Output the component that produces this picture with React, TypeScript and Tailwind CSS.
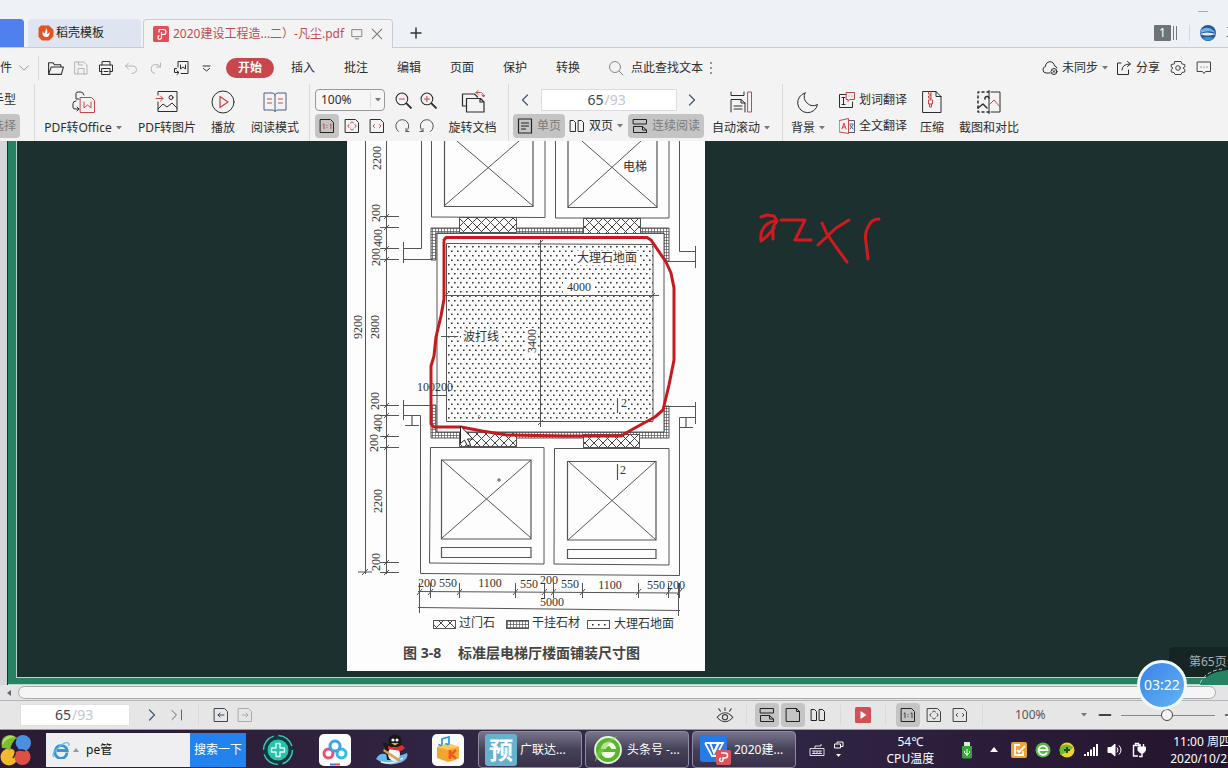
import React, { useState } from 'react';
import clsx from 'clsx';

interface IconProps {
  children: React.ReactNode;
  className?: string;
  box?: number;
}

const RED = '#c8464a';

// Thin line icon, drawn on a square grid of `box` units.
const Icon: React.FC<IconProps> = ({ children, className = 'h-4 w-4', box = 16 }) => (
  <svg
    viewBox={`0 0 ${box} ${box}`}
    className={clsx('shrink-0', className)}
    fill="none"
    stroke="currentColor"
    strokeWidth={1}
    strokeLinecap="round"
    strokeLinejoin="round"
    aria-hidden="true"
  >
    {children}
  </svg>
);

const Caret = () => (
  <svg viewBox="0 0 6 4" className="ml-1 h-1 w-1.5 shrink-0" fill="#777" aria-hidden="true">
    <path d="M0 0h6L3 3.5z" />
  </svg>
);

const ActualSize = ({ tone = RED }: { tone?: string }) => (
  <Icon>
    <path d="M1.5 1.5h10l3 3v10h-13z" />
    <path d="M4 6.5l1-.7v5M12 10.8v-5l-1 .7" stroke={tone} />
    <path d="M8 7.5v.1M8 9.5v.1" stroke={tone} />
  </Icon>
);

const FitPage = ({ tone = RED }: { tone?: string }) => (
  <Icon>
    <path d="M1.5 1.5h10l3 3v10h-13z" />
    <path d="M6.5 5L8 3.8 9.5 5M6.5 11L8 12.2 9.5 11M5 6.5L3.8 8 5 9.5M11 6.5L12.2 8 11 9.5" stroke={tone} />
  </Icon>
);

const FitWidth = ({ tone = RED }: { tone?: string }) => (
  <Icon>
    <path d="M1.5 1.5h10l3 3v10h-13z" />
    <path d="M5.5 6.5L4 8l1.5 1.5M10.5 6.5L12 8l-1.5 1.5" stroke={tone} />
  </Icon>
);

const Continuous = () => (
  <Icon>
    <path d="M1.5 1.5h13v4.5h-13zM14.5 14.5h-13v-6h9l4 3.5v2.5M10.5 8.5V12h4" />
  </Icon>
);

const TwoPages = () => (
  <Icon>
    <path d="M1.5 2.5h3l2 2v9h-5zM9.5 2.5h3l2 2v9h-5z" />
  </Icon>
);

const Chevron = ({ left = false }: { left?: boolean }) => (
  <Icon className="h-4 w-4 text-[#4b5a70]">
    <path d={left ? 'M10.5 3L5.5 8l5 5' : 'M5.5 3l5 5-5 5'} strokeWidth={1.3} />
  </Icon>
);

const Divider = ({ className }: { className?: string }) => (
  <span className={clsx('w-px shrink-0 bg-[#d9dadc]', className)} />
);

const PageField = ({ className, id }: { className: string; id: string }) => {
  const [page, setPage] = useState('65');
  return (
    <div className={clsx('flex items-center border bg-white text-sm', className)}>
      <label htmlFor={id} aria-label="页码" />
      <input
        id={id}
        value={page}
        onChange={(e) => setPage(e.target.value)}
        className="w-[17px] bg-transparent text-[#3c4654] outline-none"
      />
      <span className="text-[#c3c6ca]">/93</span>
    </div>
  );
};

const TabBar = () => (
  <header className="flex h-12 shrink-0 items-end border-b border-[#c6cdd8] bg-[#eef2f6]">
    <button aria-label="首页" className="h-7 w-6 shrink-0 rounded-tr bg-[#4f80ee]" />
    <button className="ml-1 flex h-7 w-[113px] shrink-0 items-center rounded-t bg-[#dfe5f0] pl-2.5 text-xs text-[#222]">
      <svg viewBox="0 0 16 16" className="mr-0.5 h-4 w-4" aria-hidden="true">
        <path d="M3 .5h8L15.5 5v6.5L11 15.5H4L.5 12V3z" fill="#e05325" />
        <path d="M5 6c-1.500 3 .5 6 3 6s4-2 3.500-5C10.500 8.500 9 9 9 9c1-2.500 0-4.500-1-6 0 3-1 3.500-1.500 5.500C5.500 8 5 7 5 6z" fill="#fff" />
      </svg>
      稻壳模板
    </button>
    <div className="ml-0.5 -mb-px flex h-[29px] w-[250px] shrink-0 items-center rounded-t border border-b-0 border-[#c6cdd8] bg-[#f3f3f4] pl-[9px]">
      <svg viewBox="0 0 16 16" className="mr-1 h-4 w-4 shrink-0" aria-hidden="true">
        <rect width="16" height="16" rx="1.5" fill="#dc5257" />
        <path d="M6 3.500h4.500a2.500 2.500 0 010 5H8.500M6 3.500v3M8.500 6v5.500a1.800 1.800 0 11-2-1.800" stroke="#fff" strokeWidth="1.2" fill="none" />
      </svg>
      <span className="whitespace-nowrap text-xs text-[#c24a50]">2020建设工程造...二）-凡尘.pdf</span>
      <span className="ml-auto flex items-center text-[#777]">
        <Icon className="mr-1.5 h-3.5 w-3.5"><path d="M2.5 3h11v8h-11zM6 13.5h4" /></Icon>
        <button aria-label="关闭标签" className="mr-2">
          <Icon className="h-3.5 w-3.5"><path d="M2.5 2.5l11 11M13.5 2.5l-11 11" strokeWidth={1.2} /></Icon>
        </button>
      </span>
    </div>
    <button aria-label="新建" className="ml-[15px] mb-1.5 text-[#333]">
      <Icon className="h-4 w-4"><path d="M8 3v10M3 8h10" strokeWidth={1.5} /></Icon>
    </button>
    <div className="ml-auto -mr-2.5 flex items-center pb-1.5">
      <span className="mr-0.5 flex h-4 w-[17px] items-center justify-center rounded-[1px] bg-[#6f7378] text-xs leading-4 text-white">1</span>
      <span className="h-3.5 w-1 border-x border-[#777]" />
      <Divider className="ml-3 mr-2.5 h-4" />
      <svg viewBox="0 0 16 16" className="h-4 w-4" aria-hidden="true">
        <circle cx="8" cy="8" r="8" fill="#24589f" />
        <path d="M1 5q7-5 13 1l1.800 2Q9 4.500.2 8z" fill="#78b2e0" />
        <path d="M0 9q6-3 16 0-6 1.500-9 1.500T0 9z" fill="#dcebf6" />
        <path d="M2 13q6-2 12 0-6 5-12 0z" fill="#3c94c6" />
      </svg>
      <span className="ml-2.5 text-xs text-[#555]">工</span>
    </div>
  </header>
);

const MENU = ['插入', '批注', '编辑', '页面', '保护', '转换'];

const MenuBar = () => (
  <nav className="flex h-9 shrink-0 items-center whitespace-nowrap bg-[#f3f3f4] pt-1 text-xs text-[#2d2d2d]">
    <button className="-ml-3 flex shrink-0 items-center">
      文件
      <Icon className="ml-1.5 h-3 w-3 text-[#777]"><path d="M2 5l6 6 6-6" /></Icon>
    </button>
    <Divider className="ml-2 mr-2 h-6" />
    <div className="flex shrink-0 items-center gap-[9px]">
      <button aria-label="打开">
        <Icon className="h-[17px] w-[17px]"><path d="M1.5 13.5v-11h4l1.5 2h6v2M1.5 13.5l2.500-7h11.500l-2 7z" /></Icon>
      </button>
      <button aria-label="保存" className="text-[#b5b5b8]">
        <Icon><path d="M2 2h9l3 3v9H2zM5 14V8.500h6V14M5.500 2v3h4" /></Icon>
      </button>
      <button aria-label="打印">
        <Icon><path d="M4 5V1.500h8V5M4 11.500H1.500V5h13v6.500H12M4 8.500h8v6H4zM6 11.500h4" /></Icon>
      </button>
      <button aria-label="撤销" className="text-[#b5b5b8]">
        <Icon><path d="M5.500 3L2.500 6l3 3M2.500 6h7.500q3.500 0 3.500 3.500T9 13.500" /></Icon>
      </button>
      <button aria-label="重做" className="text-[#b5b5b8]">
        <Icon><path d="M12.500 3v4h-4M12.500 7Q10 3.500 6.500 4.500T3 9t3.500 4.500" /></Icon>
      </button>
      <button aria-label="输出">
        <Icon><path d="M5 7V1.500h10v12H8M7.500 5v4l2.500-2 2.500 2V5M3.500 8.500H1.500v4h4M4 11l2 1.500-2 2" /></Icon>
      </button>
      <button aria-label="更多">
        <Icon className="h-4 w-4"><path d="M5 6h7M5.500 8.500l3 2.500 3-2.500" /></Icon>
      </button>
    </div>
    <button className="ml-3 h-5 w-12 shrink-0 rounded-full bg-[#c9474c] font-bold text-white">开始</button>
    <div className="ml-[17px] flex shrink-0 gap-[29px]">
      {MENU.map((m) => (
        <button key={m}>{m}</button>
      ))}
    </div>
    <button className="ml-7 flex shrink-0 items-center">
      <Icon className="mr-[7px] h-4 w-4 text-[#888]"><circle cx="7" cy="7" r="5.5" /><path d="M11 11l4 4" /></Icon>
      点此查找文本
    </button>
    <button aria-label="更多选项" className="shrink-0 text-[#666]">
      <Icon><path d="M8 3v.1M8 8v.1M8 13v.1" strokeWidth={1.8} /></Icon>
    </button>
    <div className="ml-auto mr-4 flex shrink-0 items-center">
      <button className="flex items-center">
        <Icon className="mr-1 h-4 w-4"><path d="M8 13H4a3.300 3.300 0 01-.5-6.500 4.500 4.500 0 019-.5 3 3 0 012.500 2" /><circle cx="12" cy="11.5" r="3" /><path d="M11 10.500l2 2M13 10.500l-2 2" /></Icon>
        未同步
        <Caret />
      </button>
      <button className="ml-2 flex items-center">
        <Icon className="mr-1 h-4 w-4"><path d="M5 3H1.500v11.500h11V10M6 10Q6 4 14 4M11.500 1.500L14.500 4l-3 2.500" /></Icon>
        分享
      </button>
      <button aria-label="设置" className="ml-2.5 text-[#444]">
        <Icon><path d="M5 1.500h6l1 2.500 2.800.5V7L13 8l1.800 1.500V12l-2.800.5-1 2H5l-1-2L1.200 12V9.500L3 8 1.200 7V4.500L4 4z" /><circle cx="8" cy="8" r="2.3" /></Icon>
      </button>
      <button aria-label="反馈" className="ml-2.5 text-[#444]">
        <Icon><path d="M1.500 2h13v9.500h-5L8 13.500 6.500 11.500h-5zM5 7v.1M8 7v.1M11 7v.1" /></Icon>
      </button>
    </div>
  </nav>
);

interface ToolProps {
  label: string;
  caret?: boolean;
  className: string;
  children: React.ReactNode;
}

const Tool: React.FC<ToolProps> = ({ label, caret, className, children }) => (
  <button className={clsx('flex shrink-0 flex-col items-center justify-between pb-[5px] pt-1.5', className)}>
    <Icon className="h-6 w-6" box={24}>{children}</Icon>
    <span className="flex items-center leading-4">
      {label}
      {caret && <Caret />}
    </span>
  </button>
);

const ACTIVE = 'bg-[#c4c4c5] rounded text-[#7b7b7b]';

const Toolbar = () => (
  <div className="flex h-[57px] shrink-0 whitespace-nowrap bg-[#f3f3f4] text-xs text-[#2d2d2d]">
    <div className="flex w-[34px] shrink-0 flex-col items-start justify-between pb-[3px] pt-1">
      <button className="-ml-2 h-6">手型</button>
      <button className={clsx('-ml-3 h-6 px-1', ACTIVE)}>选择</button>
    </div>
    <Divider />
    <Tool label="PDF转Office" caret className="w-24">
      <path d="M8 9H5V3.500q0-1.500 2-1.500h3q2 0 3 3M5 11q-3 0-3 2.500V18q0 1 3 1h3M6 17l2 2-2 2" />
      <path d="M9.500 7.500h11l3 3v12h-14zM13 12v6l3.500-3 3.500 3v-6" stroke={RED} />
    </Tool>
    <Tool label="PDF转图片" className="w-[72px]">
      <path d="M3 5V1.500h19v20H3V12M3 19l5-5 4 3 5-4 5 5" />
      <circle cx="16" cy="7.5" r="2" />
      <path d="M1 8.500h7M5.500 6L8 8.500 5.500 11" stroke={RED} />
    </Tool>
    <Tool label="播放" className="w-10">
      <circle cx="12" cy="12" r="11" />
      <path d="M9 6.500v11l8-5.500z" stroke={RED} strokeWidth={1.3} />
    </Tool>
    <Tool label="阅读模式" className="w-16">
      <path d="M12 4.500Q11 3 9 3H1v17h8q2 0 3 1.500Q13 20 15 20h8V3h-8q-2 0-3 1.500zM12 4.500v17" stroke="#4a5f86" />
      <path d="M4.500 9h4M4.500 13h4M15.500 9h4M15.500 13h4" stroke={RED} />
    </Tool>
    <Divider className="ml-0.5" />
    <div className="flex w-[130px] shrink-0 flex-col justify-between pb-[3px] pl-[5px] pt-[5px]">
      <div className="flex items-center">
        <div className="relative flex items-center">
          <select aria-label="缩放比例" className="h-[22px] w-[70px] appearance-none rounded-sm border border-[#999] bg-[#f6f6f6] pl-[5px]">
            <option>100%</option>
            <option>150%</option>
          </select>
          <span className="pointer-events-none absolute right-1 flex h-4 items-center border-l border-[#ddd]"><Caret /></span>
        </div>
        <button aria-label="缩小" className="ml-2.5">
          <Icon className="h-[17px] w-[17px]"><circle cx="6.5" cy="6.5" r="5.5" /><path d="M11 11l4 4" strokeWidth={1.8} /><path d="M4 6.500h5" stroke={RED} /></Icon>
        </button>
        <button aria-label="放大" className="ml-2">
          <Icon className="h-[17px] w-[17px]"><circle cx="6.5" cy="6.5" r="5.5" /><path d="M11 11l4 4" strokeWidth={1.8} /><path d="M4 6.500h5M6.500 4v5" stroke={RED} /></Icon>
        </button>
      </div>
      <div className="flex items-center gap-[9px]">
        <button aria-label="实际大小" className={clsx('-mr-1 flex h-6 w-6 items-center justify-center', ACTIVE)}>
          <span className="text-[#222]"><ActualSize /></span>
        </button>
        <button aria-label="适合页面"><FitPage /></button>
        <button aria-label="适合宽度"><FitWidth /></button>
        <button aria-label="顺时针旋转" className="text-[#555]"><Icon><path d="M4.500 13.500a6.500 6.500 0 117.500 0M12 10.500v3h3" /></Icon></button>
        <button aria-label="逆时针旋转" className="text-[#555]"><Icon><path d="M11.500 13.500a6.500 6.500 0 10-7.500 0M4 10.500v3H1" /></Icon></button>
      </div>
    </div>
    <Tool label="旋转文档" className="w-[65px]">
      <path d="M5 16H1.500V4h12l3 3M5.500 8.500h14l3.500 3.500v10H5.500zM19 8.500V12h4" strokeWidth={1.2} />
      <path d="M15 2.500h4.500q3 0 3 4M17 .5l-2 2 2 2M21 5l1.500 2L24 5" stroke={RED} />
    </Tool>
    <Divider className="ml-[3px]" />
    <div className="flex shrink-0 flex-col justify-between pb-[3px] pl-1 pt-[5px]">
      <div className="flex items-center justify-between px-1">
        <button aria-label="上一页"><Chevron left /></button>
        <PageField id="ribbon-page" className="h-[22px] w-[136px] border-[#dcdce0] pl-[46px]" />
        <button aria-label="下一页"><Chevron /></button>
      </div>
      <div className="flex items-center">
        <button className={clsx('flex h-6 items-center px-1', ACTIVE)}>
          <Icon className="mr-1 h-4 w-4 text-[#222]"><path d="M1.500 1h13v14h-13zM4.500 5h7M4.500 8h7M4.500 11h4" strokeWidth={1.2} /></Icon>
          单页
        </button>
        <button className="ml-1 flex h-6 items-center">
          <span className="mr-1"><TwoPages /></span>
          双页
          <Caret />
        </button>
        <button className={clsx('ml-[5px] flex h-6 items-center px-1', ACTIVE)}>
          <span className="mr-1 text-[#222]"><Continuous /></span>
          连续阅读
        </button>
      </div>
    </div>
    <Tool label="自动滚动" caret className="ml-1 w-[66px]">
      <path d="M2 2v3.500h13V2M2 22V9.500h10L16 13v9M12 9.500V13h4M5 16h8M5 19h8" />
      <path d="M19 2h3.500v20H19z" stroke={RED} />
    </Tool>
    <Divider className="ml-2" />
    <Tool label="背景" caret className="w-[50px]">
      <path d="M9 3A10 10 0 1021.500 14.500 9 9 0 019 3z" />
    </Tool>
    <div className="flex w-[78px] shrink-0 flex-col justify-between pb-[3px] pl-1.5 pt-1">
      <button className="flex h-6 items-center">
        <Icon className="mr-1 h-4 w-4"><path d="M7 2.500H.5v13h13V10M3 5.500h3M4.500 5.500v7M3 12.500h3" /><path d="M7.500.5h8v7h-5l-1.500 2v-2H7.500zM10 4v.1M13 4v.1" stroke={RED} /></Icon>
        划词翻译
      </button>
      <button className="flex h-6 items-center">
        <Icon className="mr-1 h-4 w-4"><path d="M9.500 2.500h6v12h-6M11 6h3M11 11l3-4M11 7l3 4" stroke="#4a5f86" /><path d="M.5 2.500l9-2v15l-9-1.500zM3 11l2-6 2 6M3.500 9h3" stroke={RED} /></Icon>
        全文翻译
      </button>
    </div>
    <Tool label="压缩" className="w-[42px]">
      <path d="M3 1.500h13l5 5v16H3zM16 1.500v5h5" />
      <path d="M8.500 2v2h2v2h-2v2h2v2h-2v4h4v-4M11 2v8M9.500 14v3h2v-3" stroke={RED} />
    </Tool>
    <Tool label="截图和对比" className="w-[72px]">
      <path d="M12 2H1v20h11" strokeDasharray="2 3" strokeWidth={1.5} />
      <path d="M1 18l5-4 4 4M8 9a2 2 0 114-1" strokeWidth={1.5} />
      <path d="M12 0v24M14 2h9v20h-9" />
      <path d="M12 15l5-5 6 7" stroke={RED} />
    </Tool>
  </div>
);

interface DimProps {
  x: number;
  y: number;
  children: React.ReactNode;
  turn?: boolean;
}

// Dimension label, centred on (x, y). `turn` writes it upwards.
const Dim: React.FC<DimProps> = ({ x, y, children, turn }) => (
  <text
    x={x}
    y={y}
    dy={4}
    textAnchor="middle"
    transform={turn ? `rotate(-90 ${x} ${y})` : undefined}
    className="font-['Liberation_Serif','Noto_Sans_CJK_SC',serif] text-xs"
    fill="#333"
    stroke="none"
  >
    {children}
  </text>
);

const LEFT_DIMS: Array<[number, number, string]> = [
  [377, 158, '2200'], [376, 213, '200'], [378, 238, '400'], [376, 257, '200'],
  [358, 327, '9200'], [375, 327, '2800'], [375, 401, '200'], [378, 423, '400'],
  [374, 443, '200'], [378, 501, '2200'], [376, 562, '200'],
];

const BOTTOM_DIMS: Array<[number, number, string]> = [
  [427, 583, '200'], [448, 583, '550'], [490, 583, '1100'], [529, 584, '550'],
  [549, 580, '200'], [570, 584, '550'], [610, 585, '1100'], [656, 585, '550'],
  [676, 585, '200'], [552, 602, '5000'], [579, 287, '4000'],
];

const LEFT_TICKS = [216, 227, 248, 259, 405, 415, 436, 447, 562, 572];
const BOTTOM_TICKS = [419, 430, 459, 515, 544, 553, 582, 638, 668, 679];

const FloorPlan = () => (
  <svg
    viewBox="347 141 358 530"
    className="h-[530px] w-[358px] shrink-0 bg-[#fdfdfd]"
    fill="none"
    stroke="#555"
    strokeWidth={1}
    role="img"
    aria-label="标准层电梯厅楼面铺装尺寸图"
  >
    <defs>
      <pattern id="dots" x="447" y="245" width="6" height="9" patternUnits="userSpaceOnUse">
        <path d="M1 1h1.600v1.600H1zM4 5.500h1.600v1.600H4z" fill="#333" stroke="none" />
      </pattern>
      <pattern id="cross" x="459" y="218" width="9" height="9" patternUnits="userSpaceOnUse">
        <path d="M0 0l9 9M9 0L0 9" stroke="#444" />
      </pattern>
      <pattern id="stone" width="3" height="3" patternUnits="userSpaceOnUse">
        <path d="M0 .5h3M.5 0v3" stroke="#555" strokeWidth=".7" />
      </pattern>
    </defs>

    {/* dimension chains */}
    <path d="M365.500 141V574M386.500 141V574M358 572h14M362 575l6-6" />
    {LEFT_TICKS.map((y) => (
      <path key={y} d={`M380 ${y}.5h19M384 ${y + 3}l5-5`} />
    ))}
    <path d="M418 591.500L680 593M418 607.500L680 610.500M419.500 583v30M678.500 583v33" />
    {BOTTOM_TICKS.map((x) => (
      <path key={x} d={`M${x}.5 583v15M${x - 2} 595l5-6`} />
    ))}
    {LEFT_DIMS.map(([x, y, t]) => (
      <Dim key={`${x}-${y}`} x={x} y={y} turn>{t}</Dim>
    ))}

    {/* outer walls */}
    <path d="M421.500 141V248.500H403M403.500 242v21M403 259.500H432M679.500 141V251.500H696M695.500 246v22M664 261.500H696" />
    <path d="M432 405.500H403M403.500 400v20M403 415.500H420.500V573.500L679.500 575.500V417.500H695M695.500 402v22M664 406.500H695" />
    <path d="M412 416v9M405 425.500h14M686 418v9M680 427.500h13" strokeWidth="1.2" />

    {/* upper shafts */}
    <path d="M431.500 141V217L545 217.500V141M555.500 141V218H669V141" />
    <path d="M444.500 141V206.500H533V141M568 141V207.500H657V141" strokeWidth="1.2" />
    <path d="M444 206L519 141M533 206L457 141M568 207L641 141M657 207L582 141" />

    {/* lower shafts */}
    <path d="M430.500 447.500H544V564L429.500 563zM554.500 448.500H669V565L554 564z" />
    <path d="M441.500 460H531V539H441.500zM567.500 461.500H656V540H567.500zM441.500 547.500H531V557.500H441.500zM567.500 549.500H656V558.500H567.500z" strokeWidth="1.2" />
    <path d="M442 460L531 538M531 460L442 538M568 461L656 540M656 461L568 540" />

    {/* door stones and dry-hung stone */}
    <path d="M431 228h238v33h-5v-28H436v27h-5zM431 405h5v27h228v-26h5v32H431z" fill="url(#stone)" />
    <path d="M437 233.500H664V432H437z" fill="#fdfdfd" />
    <path d="M459.500 217.500h57v15h-57zM583.500 218.500h57v15h-57zM459.500 432.500h57v14h-57zM583.500 434.500h56v13h-56z" fill="#fdfdfd" />
    <path d="M459.500 217.500h57v15h-57zM583.500 218.500h57v15h-57zM459.500 432.500h57v14h-57zM583.500 434.500h56v13h-56z" fill="url(#cross)" />

    {/* marble floor */}
    <path d="M446.500 243.500L653 244.500V421.500H446.500z" fill="url(#dots)" />
    <path d="M540.500 240V427M445 295.500H659M443 298l5-5M650 298l5-5M538 245l5-5M538 425l5-5M431 395.500H447M441 336.500H458" />
    <path d="M577 251h62v14h-62zM563 281h32v12h-32zM461 330h40v14h-40zM526 328h12v28h-12zM614 397h14v14h-14z" fill="#fdfdfd" stroke="none" />
    {BOTTOM_DIMS.map(([x, y, t]) => (
      <Dim key={`${x}-${y}`} x={x} y={y}>{t}</Dim>
    ))}
    <Dim x={532} y={341} turn>3400</Dim>
    <Dim x={607} y={258}>大理石地面</Dim>
    <Dim x={481} y={337}>波打线</Dim>
    <Dim x={635} y={167}>电梯</Dim>
    <Dim x={435} y={387}>100200</Dim>
    <path d="M617.500 398v15M617.500 464v16" strokeWidth="1.2" />
    <Dim x={624} y={403}>2</Dim>
    <Dim x={623} y={470}>2</Dim>
    <path d="M497 480h4M499 478v4M478 417h1M480 417h1M479 416v-1M479 418v1" />

    {/* legend */}
    <rect x="433.5" y="620.5" width="22" height="8" fill="url(#cross)" />
    <rect x="506.5" y="620.5" width="22" height="8" fill="url(#stone)" />
    <rect x="587.5" y="620.5" width="22" height="8" fill="url(#dots)" />
    <Dim x={477} y={623}>过门石</Dim>
    <Dim x={556} y={623}>干挂石材</Dim>
    <Dim x={644} y={624}>大理石地面</Dim>
    <g className="font-['Noto_Sans','Noto_Sans_CJK_SC',sans-serif] text-sm font-bold" fill="#444" stroke="none">
      <text x="403" y="658">图 3-8</text>
      <text x="458" y="658">标准层电梯厅楼面铺装尺寸图</text>
    </g>

    {/* hand-drawn outline */}
    <path
      d="M444 242V299L441 316 436 337 434 356 431 366V424L434 427H461L482 431 507 435 565 436H621L633 429 655 417 663 410 669 385 674 360V288L671 273 666 262 651 240 647 237.500H446L444 240"
      stroke="#c51a1f"
      strokeWidth="3"
      strokeLinejoin="round"
      strokeLinecap="round"
    />
    <path d="M460.500 426v17.500l4-3.500 3 6 3-1.500-3-5.500h5.500z" fill="#fff" stroke="#222" />
  </svg>
);

const Viewer = () => (
  <main className="relative flex min-h-0 flex-1 overflow-hidden bg-[#1d3030]">
    <div className="w-[7px] shrink-0 bg-[#d5d6da]" />
    <div className="flex min-w-0 flex-1 flex-col pl-px">
      <div className="flex min-h-0 flex-1 border-l-8 border-[#258263]">
        <div className="grid flex-1 grid-cols-[330fr_358px_523fr] items-start border-b border-l border-[#b4d9cb]">
          <span />
          <FloorPlan />
          <svg viewBox="0 0 200 200" className="h-[200px] w-[200px]" fill="none" stroke="#cf1b1e" strokeWidth={3} strokeLinecap="round" strokeLinejoin="round" aria-label="手写批注 a2×(">
            <path d="M56 76l6-2 7 1 3 5-4 6v12M70 80q-8 1-12 8-3 4-2 12 6-4 13-13M76 79h24L90 99l16 0M117 82l5 11 9 13 11 15M144 79l-13 8-18 17M174 78q-7 0-10 6-5 8-3 17l2 17" />
          </svg>
        </div>
      </div>
      <div className="h-[7px] shrink-0 border-b border-[#b4d9cb] bg-[#258263]" />
    </div>
    <div className="absolute bottom-2 -right-3 flex h-[30px] w-[71px] items-center whitespace-nowrap rounded bg-[#14211f]/70 pl-5 text-xs text-[#a9b1af]">
      第65页
    </div>
    <svg viewBox="0 0 28 20" className="absolute bottom-0 right-0 h-5 w-7" aria-hidden="true">
      <path d="M0 20Q6 7 28 5v15z" fill="#258263" />
      <path d="M0 18Q6 6 22 4" fill="none" stroke="#b4d9cb" strokeDasharray="4 2" />
    </svg>
  </main>
);

const ScrollBar = () => (
  <div className="flex h-4 shrink-0 items-center border-b border-[#b5b5b8] bg-[#e4e4e6] pr-3">
    <svg viewBox="0 0 6 6" className="mx-1.5 h-1.5 w-1.5" fill="#666" aria-hidden="true"><path d="M5 0v6L1 3z" /></svg>
    <div className="h-[13px] flex-1 rounded-full border border-[#a9a9ac] bg-[#f5f5f6]" />
  </div>
);

const StatusBar = () => (
  <footer className="flex h-7 shrink-0 items-center overflow-hidden bg-[#e6e6e7] text-xs text-[#444]">
    <PageField id="status-page" className="ml-5 h-[22px] w-[110px] shrink-0 border-[#e0e0e2] pl-[34px]" />
    <button aria-label="下一页" className="ml-3.5"><Chevron /></button>
    <button aria-label="末页" className="ml-[9px] text-[#666]">
      <Icon><path d="M3 3.500L7.500 8 3 12.500M12.500 3v10" /></Icon>
    </button>
    <Divider className="ml-[13px] h-5" />
    <button aria-label="后退" className="ml-3.5">
      <Icon><path d="M1.500 1.500h10l3 3v10h-13zM11 8H5M7 6L5 8l2 2" stroke="#3c4654" /></Icon>
    </button>
    <button aria-label="前进" className="ml-2 text-[#aaa]">
      <Icon><path d="M1.500 1.500h10l3 3v10h-13zM5 8h6M9 6l2 2-2 2" /></Icon>
    </button>
    <div className="ml-auto -mr-[11px] flex shrink-0 items-center">
      <button aria-label="护眼模式">
        <Icon className="h-[18px] w-[18px]"><path d="M1 10q7-8 14 0-7 8-14 0zM8 4V1.500M4 4.500L2.500 2.500M12 4.500l1.500-2" /><circle cx="8" cy="10" r="2.3" /></Icon>
      </button>
      <Divider className="ml-3 mr-2 h-5" />
      <button aria-label="连续" className={clsx('flex h-6 w-6 items-center justify-center', ACTIVE)}><span className="text-[#222]"><Continuous /></span></button>
      <button aria-label="单页" className={clsx('ml-0.5 flex h-6 w-6 items-center justify-center', ACTIVE)}>
        <Icon className="h-4 w-4 text-[#222]"><path d="M1.500 1.500h10l3 3v10h-13zM11.500 1.500v3h3" /></Icon>
      </button>
      <button aria-label="双页" className="ml-[5px] text-[#222]"><TwoPages /></button>
      <Divider className="ml-3.5 mr-3.5 h-5" />
      <button aria-label="播放">
        <svg viewBox="0 0 16 16" className="h-4 w-4" aria-hidden="true"><rect width="16" height="16" rx="1.5" fill="#d25054" /><path d="M5.500 4v8l6-4z" fill="#fff" /></svg>
      </button>
      <Divider className="ml-3.5 mr-2.5 h-5" />
      <button aria-label="实际大小" className={clsx('flex h-6 w-6 items-center justify-center', ACTIVE)}><span className="text-[#222]"><ActualSize tone="#444" /></span></button>
      <button aria-label="适合页面" className="ml-1.5"><FitPage tone="#444" /></button>
      <button aria-label="适合宽度" className="ml-2.5"><FitWidth tone="#444" /></button>
      <Divider className="ml-3.5 mr-8 h-5" />
      <button className="flex w-[72px] items-center justify-between text-[#555]">100%<Caret /></button>
      <button aria-label="缩小" className="ml-2.5"><Icon className="h-4 w-4"><path d="M2.500 8h11" strokeWidth={1.8} /></Icon></button>
      <input
        type="range"
        aria-label="缩放"
        defaultValue={49}
        className="ml-2 h-3 w-[94px] appearance-none bg-[linear-gradient(#888,#888)] bg-[length:100%_1px] bg-center bg-no-repeat [&::-webkit-slider-thumb]:h-3 [&::-webkit-slider-thumb]:w-3 [&::-webkit-slider-thumb]:appearance-none [&::-webkit-slider-thumb]:rounded-full [&::-webkit-slider-thumb]:border [&::-webkit-slider-thumb]:border-[#444] [&::-webkit-slider-thumb]:bg-[#f5f5f5]"
      />
      <button aria-label="放大" className="ml-2"><Icon><path d="M2.500 8h11M8 2.500v11" strokeWidth={1.5} /></Icon></button>
    </div>
  </footer>
);

const TaskButton = ({ label, children }: { label: string; children: React.ReactNode }) => (
  <button className="flex h-full w-[104px] shrink-0 items-center whitespace-nowrap rounded-sm border border-[#8f8b9f] bg-linear-to-b from-[#77758c] via-[#464158] to-[#383049] pl-1.5 text-xs text-white">
    <svg viewBox="0 0 32 32" className="mr-[3px] h-8 w-8 shrink-0" aria-hidden="true">{children}</svg>
    {label}
  </button>
);

const TaskBar = () => (
  <div className="flex h-[39px] shrink-0 items-center overflow-hidden border-t border-[#9b97a6] bg-linear-to-r from-[#2a1b33] via-[#33294b] via-55% to-[#24142c] pt-px text-xs text-white">
    <button aria-label="开始菜单" className="shrink-0">
      <svg viewBox="0 0 32 32" className="h-8 w-8" aria-hidden="true">
        <circle cx="23" cy="9" r="8" fill="#4a8fe0" />
        <circle cx="9" cy="23" r="8.5" fill="#f2b82e" />
        <circle cx="22.5" cy="23" r="8" fill="#dd5145" />
        <path d="M17 4Q12-1 6 2T2 14q6 0 8 3 1-9 7-13z" fill="#7dbb33" />
        <path d="M15 3Q9 0 5 4t-2 7Q5 4 15 3z" fill="#b3e05c" />
        <path d="M16 17q5-2 9 0M15 15q1 5-2 9M16 5q-3 6 2 10" stroke="#2a1b33" strokeWidth="1.5" fill="none" />
      </svg>
    </button>
    <form className="ml-3.5 flex h-[34px] w-[200px] shrink-0" onSubmit={(e) => e.preventDefault()}>
      <div className="flex flex-1 items-center bg-[#efeff1] pl-1.5">
        <svg viewBox="0 0 18 18" className="h-[18px] w-[18px] shrink-0" fill="none" aria-hidden="true">
          <path d="M15 11.500A6 6 0 113.500 9 6 6 0 0115.200 9.500H5" stroke="#3795dc" strokeWidth="2.8" />
          <path d="M2 16q-3-3 4-9Q13 .5 16.500 2q1 1 0 3" stroke="#69b6ea" strokeWidth="1.2" />
        </svg>
        <svg viewBox="0 0 6 4" className="mx-[3px] h-1 w-1.5 shrink-0" fill="#999" aria-hidden="true"><path d="M3 0l3 4H0z" /></svg>
        <input aria-label="搜索" defaultValue="pe管" className="ml-1 w-24 bg-transparent text-[#111] outline-none" />
      </div>
      <button className="w-14 bg-[#2283ee] text-white">搜索一下</button>
    </form>
    <button aria-label="安全助手" className="ml-4 shrink-0">
      <svg viewBox="0 0 32 32" className="h-8 w-8" fill="none" aria-hidden="true">
        <circle cx="16" cy="16" r="15" fill="#17373f" />
        <circle cx="16" cy="16" r="14.5" stroke="#3fc5b5" strokeWidth="1.5" strokeDasharray="18 4.8" />
        <circle cx="16" cy="16" r="10.5" fill="#27c3ad" />
        <path d="M14 9.500h4V14h4.500v4H18v4.500h-4V18H9.500v-4H14z" stroke="#d8fff7" strokeWidth="1.4" strokeLinejoin="round" />
      </svg>
    </button>
    <button aria-label="网盘" className="ml-[25px] shrink-0">
      <svg viewBox="0 0 32 32" className="h-8 w-8" fill="none" aria-hidden="true">
        <rect width="32" height="32" rx="5" fill="#fff" />
        <circle cx="9.5" cy="19.5" r="4.5" stroke="#e35572" strokeWidth="3" />
        <circle cx="22.5" cy="19.5" r="4.5" stroke="#35b9e6" strokeWidth="3" />
        <circle cx="16" cy="12" r="5" stroke="#39a5ea" strokeWidth="3" />
        <path d="M11 30.500h5" stroke="#4573df" strokeWidth="2" /><path d="M16 30.500h5" stroke="#db4a58" strokeWidth="2" />
      </svg>
    </button>
    <button aria-label="企鹅游戏" className="ml-[25px] shrink-0">
      <svg viewBox="0 0 32 32" className="h-8 w-8" aria-hidden="true">
        <path d="M0 25q3-6 9-5 8 5 22-1 2 5-5 9-14 6-26-3z" fill="#6bb9e9" />
        <path d="M5 28q12 3 22-4" stroke="#e1f4fd" strokeWidth="1.5" fill="none" />
        <path d="M6 8l6 2h14l2 4-5 3v9H11l-1-10z" fill="#1a191c" />
        <ellipse cx="18" cy="20" rx="6" ry="7" fill="#f7f7f7" />
        <circle cx="19" cy="7" r="6.5" fill="#17171a" />
        <circle cx="17" cy="6" r="1.6" fill="#fff" /><circle cx="21" cy="6" r="1.6" fill="#fff" />
        <path d="M15 9h8l-4 2.500z" fill="#f0a52c" />
        <path d="M12 12q7 3 14-1l3 3-4 3-13-2z" fill="#d7332d" />
        <path d="M8 15l17 11-2 2L7 17z" fill="#d9a054" />
      </svg>
    </button>
    <button aria-label="音乐盒" className="ml-6 shrink-0">
      <svg viewBox="0 0 32 32" className="h-8 w-8" fill="none" aria-hidden="true">
        <rect width="32" height="32" rx="5" fill="#fbfbfa" />
        <path d="M5 13l11-3 11 3v11l-11 4-11-4z" fill="#f2a72c" />
        <path d="M5 13l11 3 11-3-11-4z" fill="#ffc95a" />
        <path d="M18 15l9-2v11l-9 4z" fill="#f5ad38" />
        <path d="M18 16v9M24 16l-5 4.500 5 4" stroke="#f05a25" strokeWidth="2.8" />
        <path d="M10 10V5l7-2v6M17 9a1.500 1.500 0 11-3 0M10 10a1.500 1.500 0 11-3 0" stroke="#3c9bd1" strokeWidth="1.8" />
      </svg>
    </button>
    <div className="ml-3.5 flex h-full shrink-0 gap-[3px]">
      <TaskButton label="广联达...">
        <rect width="32" height="32" rx="3" fill="#67b1cd" />
        <text x="16" y="25" textAnchor="middle" fontSize="24" fontWeight="bold" fill="#fff">预</text>
      </TaskButton>
      <TaskButton label="头条号 -...">
        <circle cx="16" cy="16" r="13" fill="#58b52e" stroke="#e9f8dd" strokeWidth="1.8" />
        <path d="M9 15a7.500 7 0 0115 0h-4.500q-3-6-6 0zM9 18h14.500q-2 6-7.500 6t-7-6z" fill="#f2fbe7" />
        <path d="M3 28Q4 10 27 1q-12 8-17 19z" fill="#7fd148" opacity=".55" />
      </TaskButton>
      <TaskButton label="2020建...">
        <rect x="1" y="1" width="27" height="27" rx="3" fill="#257bea" />
        <path d="M6 9h5l4 10 5-10h4l-7 13h-4L6 9M11 9h8l-4 9" stroke="#fff" strokeWidth="1.8" fill="none" />
        <rect x="17" y="16" width="15" height="15" rx="2" fill="#dc555c" />
        <path d="M22 19h4a2.500 2.500 0 010 5h-2v2a1.700 1.700 0 11-2-1.800" stroke="#fff" strokeWidth="1.5" fill="none" />
      </TaskButton>
    </div>
    <div className="ml-auto -mr-1.5 flex shrink-0 items-center">
      <svg viewBox="0 0 16 16" className="h-4 w-4" fill="none" stroke="#ddd" aria-label="输入法">
        <path d="M1 6.500h14v7H1zM3 9h10M3 11.500h10M5 9v2.500M8 9v2.500M11 9v2.500M6 6V4h6V2" />
      </svg>
      <svg viewBox="0 0 12 18" className="ml-2 h-[18px] w-3" fill="none" stroke="#fff" aria-hidden="true">
        <path d="M4 2.500V1h6v4.500H8M1.500 3h6v4h-6z" /><path d="M3 13h5l-2.500 3z" fill="#fff" stroke="none" />
      </svg>
      <div className="ml-[42px] text-center leading-[17px]">
        <div>54℃</div>
        <div>CPU温度</div>
      </div>
      <svg viewBox="0 0 12 18" className="ml-[27px] h-[18px] w-3" aria-label="USB">
        <path d="M3 1h6v5H3z" fill="#dfe9da" /><path d="M1 5h10v11q0 1.500-2 1.500H3q-2 0-2-1.500z" fill="#3aa53a" />
        <path d="M6 8v7M3.500 10v2L6 13.500 8.500 12v-2" stroke="#fff" fill="none" />
      </svg>
      <svg viewBox="0 0 8 5" className="ml-[17px] h-[5px] w-2" fill="#fff" aria-hidden="true"><path d="M4 0l4 5H0z" /></svg>
      <svg viewBox="0 0 16 16" className="ml-[13px] h-4 w-4" fill="none" aria-hidden="true">
        <rect width="16" height="16" rx="2" fill="#eca43a" /><path d="M9 3H4v10h8V9M6 8l2 2 6-6" stroke="#fff" strokeWidth="1.8" />
      </svg>
      <svg viewBox="0 0 16 16" className="ml-2 h-4 w-4" fill="none" aria-hidden="true">
        <circle cx="8" cy="8" r="7.5" fill="#56b847" /><path d="M12 10.500A4.500 4.500 0 1112.500 8H4" stroke="#fff" strokeWidth="1.8" />
      </svg>
      <svg viewBox="0 0 16 16" className="ml-2 h-4 w-4" fill="none" aria-hidden="true">
        <circle cx="8" cy="8" r="7.5" fill="#f0cf2e" /><path d="M1 5q6-5 13 0-2 4-13 8z" fill="#6fb92f" /><path d="M8 5v6M5 8h6" stroke="#234d15" strokeWidth="2" />
      </svg>
      <svg viewBox="0 0 16 16" className="ml-2 h-4 w-4" fill="#fff" aria-label="网络">
        <path d="M1 12h2v2H1zM4 10h2v4H4zM7 7.500h2V14H7zM10 5h2v9h-2zM13 2h2v12h-2z" />
      </svg>
      <svg viewBox="0 0 16 16" className="ml-2 h-4 w-4" fill="none" stroke="#fff" aria-label="音量">
        <path d="M1 5.500h3L8 2v12l-4-3.500H1z" fill="#fff" /><path d="M10 5.500q2 2.500 0 5M12 3.500q4 4.500 0 9" />
      </svg>
      <svg viewBox="0 0 16 16" className="ml-2 h-4 w-4" fill="none" stroke="#fff" aria-label="电源">
        <path d="M7 14H2.500V3.500h7M4.500 3V1.500h3V3" strokeWidth="1.4" />
        <path d="M7 5h7.500v3.500L12.500 11h-3L7 8.500z" fill="#fff" /><path d="M9 5V2M12.500 5V2M11 11v3.500H8" strokeWidth="1.4" />
      </svg>
      <div className="ml-[23px] text-center leading-[17px]">
        <div>11:00 周四</div>
        <div>2020/10/22</div>
      </div>
    </div>
  </div>
);

const App: React.FC = () => (
  <div className="relative flex h-screen flex-col overflow-hidden font-['Noto_Sans','Noto_Sans_CJK_SC',sans-serif]">
    <TabBar />
    <MenuBar />
    <Toolbar />
    <Viewer />
    <ScrollBar />
    <StatusBar />
    <TaskBar />
    <span className="absolute right-5 top-[11px] h-px w-2.5 bg-[#aaa]" />
    <div className="absolute bottom-[58px] right-[41px] flex h-[50px] w-[50px] items-center justify-center rounded-full border-[3px] border-[#eef8fe] bg-linear-to-br from-[#3b82e6] to-[#62b4f7] text-sm text-white">
      03:22
    </div>
  </div>
);

export default App;
